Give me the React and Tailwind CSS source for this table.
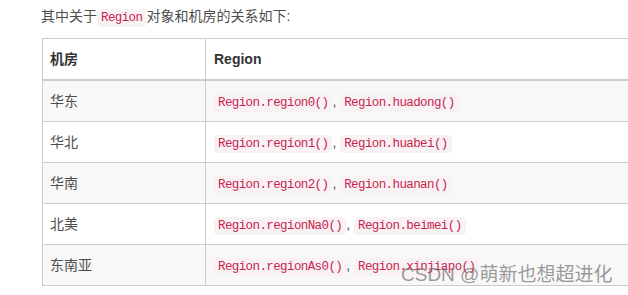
import React from "react";

const rows = [
  { room: "华东", a: "Region.region0()", b: "Region.huadong()" },
  { room: "华北", a: "Region.region1()", b: "Region.huabei()" },
  { room: "华南", a: "Region.region2()", b: "Region.huanan()" },
  { room: "北美", a: "Region.regionNa0()", b: "Region.beimei()" },
  { room: "东南亚", a: "Region.regionAs0()", b: "Region.xinjiapo()" },
];

const Code = ({ children }) => (
  <code className="rounded-[4px] bg-[#f9f2f4] px-1 py-[2px] font-['Liberation_Mono','Noto_Sans_CJK_SC',monospace] text-[12.5px] leading-[13px] tracking-[-0.6px] text-[#c7254e]">
    {children}
  </code>
);

export default function App() {
  return (
    <div className="relative h-[295px] w-[628px] overflow-hidden bg-white font-['Liberation_Sans','Noto_Sans_CJK_SC',sans-serif] text-[14px] text-[#4d4d4d]">
      {/* intro line */}
      <p className="pl-[41px] pt-1 leading-6">
        其中关于<Code>Region</Code>对象和机房的关系如下:
      </p>

      {/* mapping table */}
      <table className="ml-[42px] mt-[10px] w-[620px] table-fixed border-separate border-spacing-0 border-l border-t border-[#ccc]">
        <colgroup>
          <col className="w-[163px]" />
          <col />
        </colgroup>
        <thead>
          <tr className="bg-white">
            <th className="h-[42px] border-b-2 border-r border-[#ccc] pl-[7px] text-left align-middle font-bold text-[#333]">
              机房
            </th>
            <th className="h-[42px] border-b-2 border-r border-[#ccc] pl-2 text-left align-middle font-bold text-[#333]">
              Region
            </th>
          </tr>
        </thead>
        <tbody>
          {rows.map((r, i) => (
            <tr key={r.room} className={i % 2 === 0 ? "bg-[#f8f8f8]" : "bg-white"}>
              <td className="h-[41px] border-b border-r border-[#ccc] pl-[7px] align-middle">{r.room}</td>
              <td className="h-[41px] border-b border-r border-[#ccc] pl-2 align-middle">
                <Code>{r.a}</Code>, <Code>{r.b}</Code>
              </td>
            </tr>
          ))}
        </tbody>
      </table>

      {/* watermark */}
      <div className="absolute left-[401px] top-[263px] whitespace-nowrap text-[19px] leading-[24px] text-[rgba(110,110,110,0.7)]">
        CSDN @萌新也想超进化
      </div>
    </div>
  );
}
